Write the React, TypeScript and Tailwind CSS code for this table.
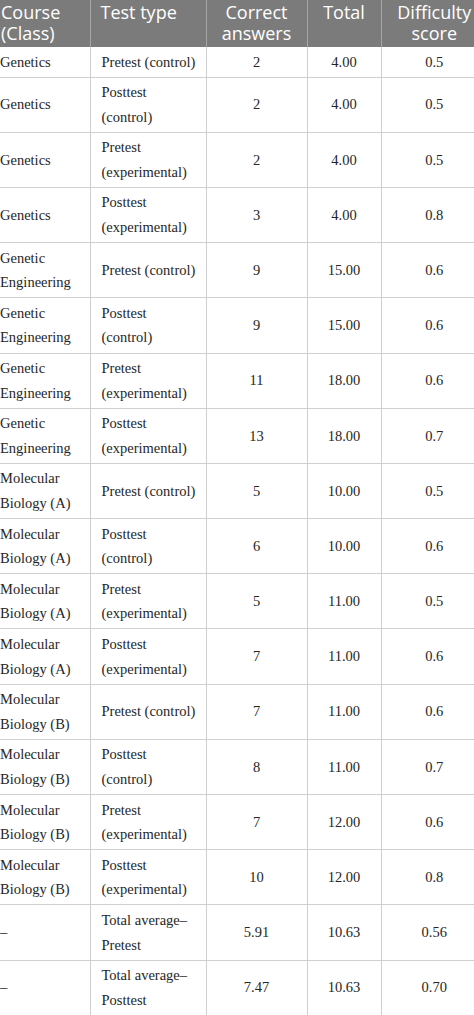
import React from 'react';

type Row = {
  course: string[];
  test: string[];
  correct: string;
  total: string;
  score: string;
};

const rows: Row[] = [
  { course: ['Genetics'], test: ['Pretest (control)'], correct: '2', total: '4.00', score: '0.5' },
  { course: ['Genetics'], test: ['Posttest', '(control)'], correct: '2', total: '4.00', score: '0.5' },
  { course: ['Genetics'], test: ['Pretest', '(experimental)'], correct: '2', total: '4.00', score: '0.5' },
  { course: ['Genetics'], test: ['Posttest', '(experimental)'], correct: '3', total: '4.00', score: '0.8' },
  { course: ['Genetic', 'Engineering'], test: ['Pretest (control)'], correct: '9', total: '15.00', score: '0.6' },
  { course: ['Genetic', 'Engineering'], test: ['Posttest', '(control)'], correct: '9', total: '15.00', score: '0.6' },
  { course: ['Genetic', 'Engineering'], test: ['Pretest', '(experimental)'], correct: '11', total: '18.00', score: '0.6' },
  { course: ['Genetic', 'Engineering'], test: ['Posttest', '(experimental)'], correct: '13', total: '18.00', score: '0.7' },
  { course: ['Molecular', 'Biology (A)'], test: ['Pretest (control)'], correct: '5', total: '10.00', score: '0.5' },
  { course: ['Molecular', 'Biology (A)'], test: ['Posttest', '(control)'], correct: '6', total: '10.00', score: '0.6' },
  { course: ['Molecular', 'Biology (A)'], test: ['Pretest', '(experimental)'], correct: '5', total: '11.00', score: '0.5' },
  { course: ['Molecular', 'Biology (A)'], test: ['Posttest', '(experimental)'], correct: '7', total: '11.00', score: '0.6' },
  { course: ['Molecular', 'Biology (B)'], test: ['Pretest (control)'], correct: '7', total: '11.00', score: '0.6' },
  { course: ['Molecular', 'Biology (B)'], test: ['Posttest', '(control)'], correct: '8', total: '11.00', score: '0.7' },
  { course: ['Molecular', 'Biology (B)'], test: ['Pretest', '(experimental)'], correct: '7', total: '12.00', score: '0.6' },
  { course: ['Molecular', 'Biology (B)'], test: ['Posttest', '(experimental)'], correct: '10', total: '12.00', score: '0.8' },
  { course: ['–'], test: ['Total average–', 'Pretest'], correct: '5.91', total: '10.63', score: '0.56' },
  { course: ['–'], test: ['Total average–', 'Posttest'], correct: '7.47', total: '10.63', score: '0.70' },
];

const Lines = ({ lines }: { lines: string[] }) => (
  <>
    {lines.map((l, i) => (
      <div key={i} className="whitespace-nowrap">
        {l}
      </div>
    ))}
  </>
);

const App: React.FC = () => {
  return (
    <div className="w-[474px] h-[1015px] overflow-hidden bg-white">
      {/* table runs past both edges of the frame, as in the cropped source */}
      <table className="ml-[-9px] w-[496px] table-fixed border-collapse">
        <colgroup>
          <col className="w-[99px]" />
          <col className="w-[116px]" />
          <col className="w-[101px]" />
          <col className="w-[74px]" />
          <col className="w-[106px]" />
        </colgroup>
        <thead>
          <tr className="bg-[#7b7b7b] text-white text-[18px] leading-[21px] font-[family-name:'Open_Sans',sans-serif] h-[47px]">
            <th className="align-top text-left font-normal pt-[2px] pl-[10px] border-r border-[#a6a6a6]">
              <div>Course</div>
              <div>(Class)</div>
            </th>
            <th className="align-top text-left font-normal pt-[2px] pl-[10px] border-r border-[#a6a6a6]">
              Test type
            </th>
            <th className="align-top text-center font-normal pt-[2px] border-r border-[#a6a6a6]">
              <div>Correct</div>
              <div>answers</div>
            </th>
            <th className="align-top text-center font-normal pt-[2px] border-r border-[#a6a6a6]">
              Total
            </th>
            <th className="align-top text-center font-normal pt-[2px] whitespace-nowrap">
              <div>Difficulty</div>
              <div>score</div>
            </th>
          </tr>
        </thead>
        <tbody className="font-[family-name:'Liberation_Serif',serif] text-[14.5px] leading-[24.6px] text-[#262626]">
          {rows.map((r, i) => (
            <tr key={i} className="border-b border-[#cfcfcf]">
              <td className="align-middle text-left py-[2.5px] pl-[9px] border-r border-[#cfcfcf]">
                <Lines lines={r.course} />
              </td>
              <td className="align-middle text-left py-[2.5px] pl-[11px] border-r border-[#cfcfcf]">
                <Lines lines={r.test} />
              </td>
              <td className="align-middle text-center py-[2.5px] border-r border-[#cfcfcf]">{r.correct}</td>
              <td className="align-middle text-center py-[2.5px] border-r border-[#cfcfcf]">{r.total}</td>
              <td className="align-middle text-center py-[2.5px]">{r.score}</td>
            </tr>
          ))}
        </tbody>
      </table>
    </div>
  );
};

export default App;
